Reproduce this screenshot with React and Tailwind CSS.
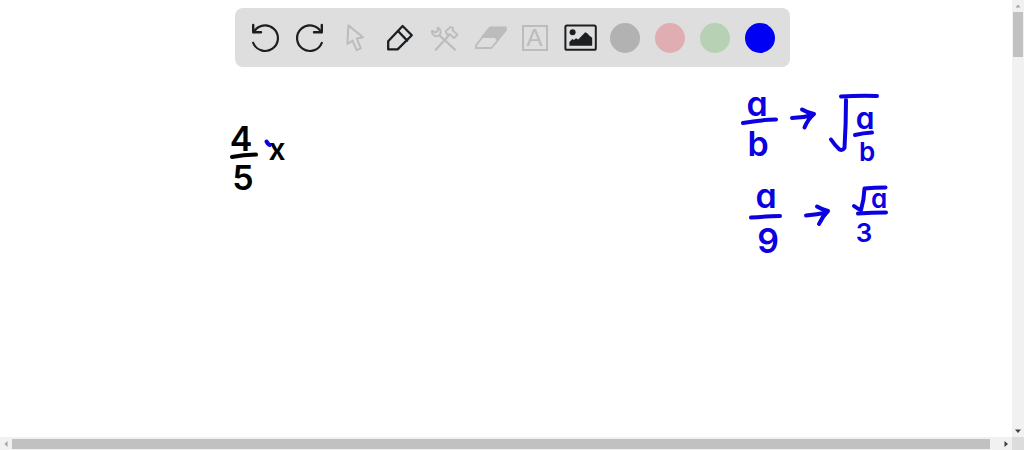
import React, { useState } from 'react';

const Icon = ({ children, className = 'text-[#1c1f22]' }) => (
    <svg viewBox="0 0 30 30" fill="none" stroke="currentColor" strokeWidth="2" strokeLinejoin="round" strokeLinecap="round" className={`block w-full h-full overflow-visible ${className}`}>
        {children}
    </svg>
);

const MUTED = 'text-[#bcbcbc]';

const tools = [
    {
        id: 'Undo',
        icon: (
            <Icon>
                <path d="M3.8 9.2A12.8 12.8 0 1 1 3.2 19.8" strokeWidth="2.2" />
                <path d="M3.2 2v7.200h7.800" strokeWidth="2.4" />
            </Icon>
        ),
    },
    {
        id: 'Redo',
        icon: (
            <Icon>
                <path d="M26.200 9.200A12.800 12.800 0 1 0 26.800 19.800" strokeWidth="2.2" />
                <path d="M26.800 2v7.200h-7.800" strokeWidth="2.4" />
            </Icon>
        ),
    },
    {
        id: 'Select',
        icon: (
            <Icon className={MUTED}>
                <path d="M8.4 2.4L23 14.2l-6.2 1.4 4 9.8-4.2 1.8-4-9.6-5.2 3.2z" />
            </Icon>
        ),
    },
    {
        id: 'Pencil',
        icon: (
            <Icon>
                <path d="M3.2 26.4v-8.2L17.6 3l9.2 9.2-14.2 14.2zM13 8l9.2 9.6" strokeWidth="2.3" />
            </Icon>
        ),
    },
    {
        id: 'Tools',
        icon: (
            <Icon className={MUTED}>
                <path d="M2 7.600c-.6 3.800 3.200 6.800 6.400 5.200c3.200-1.600 3-6.800-.8-8.200v3.400l-2.200 1.600z" strokeWidth="1.8" />
                <path d="M9.500 12.500L25 26.600" strokeWidth="2.2" />
                <path d="M15.600 8.200l5.200-4.400 2.400 1.400-.6 2.200 5 4.200-3.600 3.400-4.200-3.800-2.600.6z" strokeWidth="1.8" />
                <path d="M18.800 12.600L5.800 26.800" strokeWidth="2.2" />
            </Icon>
        ),
    },
    {
        id: 'Eraser',
        icon: (
            <Icon className={MUTED}>
                <path d="M15 4.4h15.8v2.8L16.6 25H.8v-2.2z" strokeWidth="1.8" />
                <path d="M15 4.4h15.8v2.8l-8.400 10.400-2.400-3.200H6.800z" fill="currentColor" strokeWidth="1" />
            </Icon>
        ),
    },
    {
        id: 'Text',
        icon: (
            <span className={`flex w-[26px] h-[26px] mx-auto items-center justify-center border-2 border-[#bcbcbc] font-['Liberation_Sans',sans-serif] font-medium text-[24px] leading-none ${MUTED}`}>A</span>
        ),
    },
    {
        id: 'Image',
        icon: (
            <Icon>
                <rect x="0.4" y="2.6" width="30.4" height="24.2" rx="1.6" />
                <circle cx="7.6" cy="9.2" r="3" fill="currentColor" stroke="none" />
                <path d="M4.400 22.800v-3.800l3-3 1.600 1 2-1.800 2.200 1.400 7-7.400 2 1 2.600 2.800 2.400 1.800v8z" fill="currentColor" stroke="none" />
            </Icon>
        ),
    },
];

const swatches = [
    { id: 'Black', color: 'bg-[#b2b2b2]' },
    { id: 'Red', color: 'bg-[#e0aeb2]' },
    { id: 'Green', color: 'bg-[#b6d1b4]' },
    { id: 'Blue', color: 'bg-[#0000f5]' },
];

const Toolbar = () => {
    const [, setTool] = useState('Pencil');
    const [, setColor] = useState('Blue');

    return (
        <div role="toolbar" aria-label="Drawing tools" className="flex items-center gap-[15px] h-[59px] px-[15px] rounded-lg bg-[#dedede]">
            {tools.map(tool => (
                <button key={tool.id} type="button" aria-label={tool.id} onClick={() => setTool(tool.id)} className="w-[30px] h-[30px]">
                    {tool.icon}
                </button>
            ))}
            {swatches.map(s => (
                <button key={s.id} type="button" aria-label={s.id} onClick={() => setColor(s.id)} className={`w-[30px] h-[30px] rounded-full ${s.color}`} />
            ))}
        </div>
    );
};

const Board = () => (
    <svg className="absolute inset-0 w-full h-full font-['Inter',sans-serif] font-semibold [font-feature-settings:'cv11']" fill="none" strokeWidth="4" strokeLinecap="round" strokeLinejoin="round" textAnchor="middle">
        <g className="stroke-black">
            <path d="M232 157q11-2 24-2.400" />
            <g className="fill-black stroke-none text-[34px]">
                <text x="241" y="151">4</text>
                <text x="243" y="190">5</text>
            </g>
            <g className="fill-black stroke-none text-[30px]">
                <text x="277" y="160">x</text>
            </g>
        </g>
        <g className="stroke-[#0a00e0]">
            <path d="M266.500 141.500q1 2 3 3.500" />

            {/* a/b -> sqrt(a/b) */}
            <path d="M743 123q15-3 33-3.500" />
            <path d="M792 118q10 0 21-3M802 109.500q5 3 12 4.500q-6 5-9.500 13.500" />
            <path d="M831 139.500q4 6 8.500 10q3 1.500 5-1.500q1.500-24 1.500-48M841 96.500q18-1 36-.5" />
            <path d="M855 135q8-2 17-2.500" />

            {/* a/9 -> sqrt(a)/3 */}
            <path d="M751 217.500q14-1 29-1.500" />
            <path d="M806 215.500q11-1 21-3M817 206.500q5 3 11 4.500q-6 6-9 13" />
            <path d="M854 206q4 3 7 4q3-10 3.500-21.500q10-1 21-1" />
            <path d="M858 213.500q14-1 28-1" />

            <g className="fill-[#0a00e0] stroke-none text-[34px]">
                <text x="757" y="116">a</text>
                <text x="758" y="156">b</text>
                <text x="766" y="208">a</text>
                <text x="768" y="253">9</text>
            </g>
            <g className="fill-[#0a00e0] stroke-none text-[30px]">
                <text x="865" y="129">a</text>
            </g>
            <g className="fill-[#0a00e0] stroke-none text-[26px]">
                <text x="867" y="161">b</text>
                <text x="879" y="208">a</text>
                <text x="864" y="242">3</text>
            </g>
        </g>
    </svg>
);

const ScrollArrow = ({ label, d, className }) => (
    <button type="button" aria-label={label} className={`flex w-3 h-3 shrink-0 items-center justify-center ${className}`}>
        <svg viewBox="0 0 6 6" className="w-[6px] h-[6px]" fill="currentColor"><path d={d} /></svg>
    </button>
);

const App = () => {
    return (
        <div className="relative flex flex-col h-screen bg-white overflow-hidden">
            <div className="flex flex-1 min-h-0">
                <main className="relative flex-1">
                    <Board />
                </main>
                <div className="flex flex-col w-3 bg-[#f1f1f1]">
                    <ScrollArrow label="Scroll up" d="M.5 4.500L3 1.500l2.500 3z" className="text-[#a3a3a3]" />
                    <div className="flex-1 px-px">
                        <div className="h-[11%] bg-[#c1c1c1]" />
                    </div>
                    <ScrollArrow label="Scroll down" d="M0 1.500h6L3 5z" className="text-[#404040]" />
                </div>
            </div>
            <div className="flex h-[13px] items-center bg-[#f1f1f1]">
                <ScrollArrow label="Scroll left" d="M4.500 0v6L1.500 3z" className="text-[#a3a3a3]" />
                <div className="flex-1">
                    <div className="w-[99%] h-[10px] bg-[#c1c1c1]" />
                </div>
                <ScrollArrow label="Scroll right" d="M1.500 0v6L5 3z" className="text-[#404040]" />
                <div className="w-3 h-full bg-[#dcdcdc]" />
            </div>
            <header className="absolute inset-x-0 top-2 flex justify-center">
                <Toolbar />
            </header>
        </div>
    );
};

export default App;
